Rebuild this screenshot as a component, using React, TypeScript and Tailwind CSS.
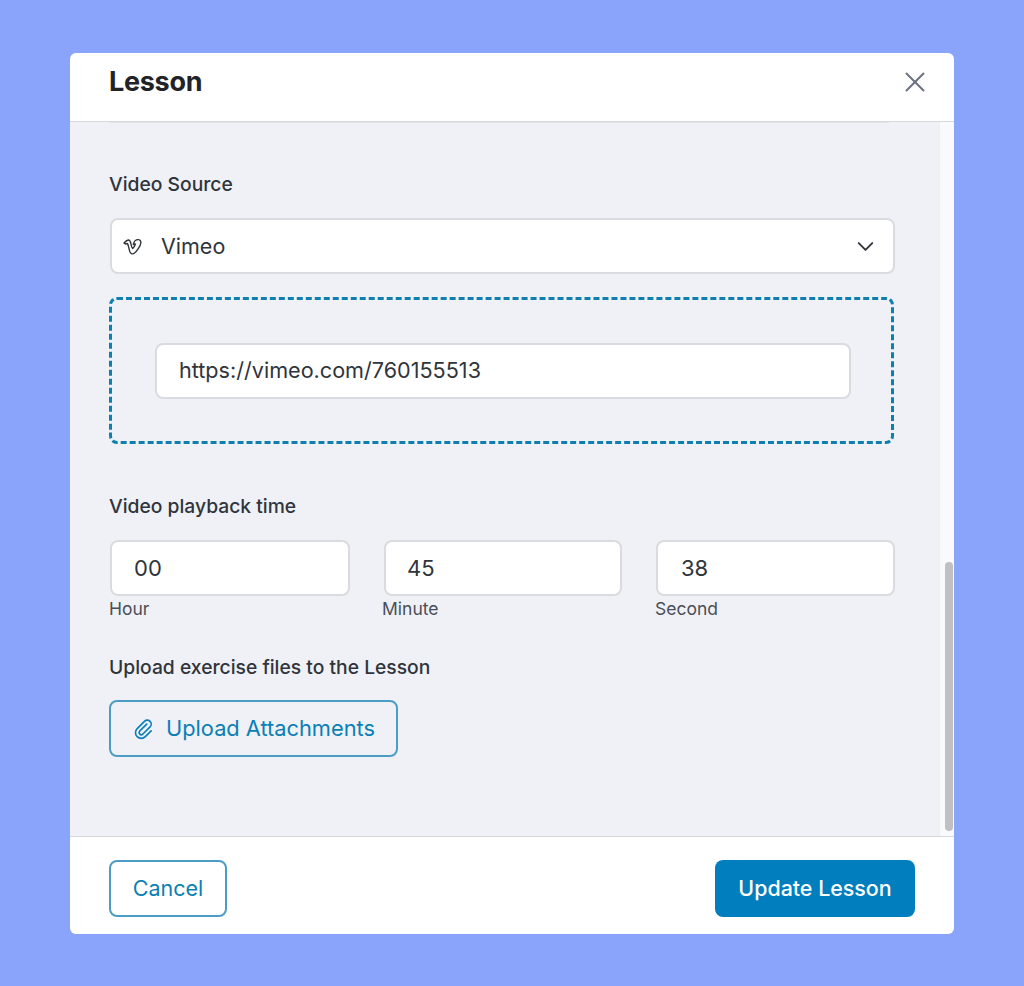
import { ChevronDown, X } from "lucide-react";

function VimeoIcon() {
  return (
    <svg width="19" height="17" viewBox="0 0 19 17" fill="none" stroke="#30343b" strokeWidth="1.4" strokeLinecap="round" strokeLinejoin="round">
      <path d="M1 5C2.500 3.500 4 2 5.500 2 7 2 7.500 3.500 8 6c.3 2 .8 4 1.600 4.500.9-.5 2.900-3.500 2.700-4.500-.5 0-1.300.3-2 .6.500-3.100 2.700-5.100 5.200-5 2 .2 2.500 1.900 2.300 3.400-.3 3-3.800 8-6.300 10-2 1.500-3.500 1-4.500-1-1-2.500-1.500-6-2.200-8-.3-.6-.8-.6-1.800 0z" />
    </svg>
  );
}

function ClipIcon() {
  return (
    <svg width="22" height="22" viewBox="0 0 20 20" fill="none" stroke="currentColor" strokeWidth="1.500" strokeLinecap="round" strokeLinejoin="round">
      <path d="M12.500 5.500 6 12a2 2 0 0 0 2.800 2.800l6.700-6.700a3.600 3.600 0 0 0-5.100-5.100L3.800 9.600a5.200 5.200 0 0 0 7.400 7.400l5.300-5.300" />
    </svg>
  );
}

function TimeField({ value, label, fieldClass }: { value: string; label: string; fieldClass: string }) {
  return (
    <div className="flex flex-col">
      <div className={`h-[56px] flex items-center bg-white border-2 border-[#d9dbe0] rounded-lg text-[22px] text-[#30343b] ${fieldClass}`}>
        {value}
      </div>
      <span className="mt-px text-[17.5px] leading-6 text-[#4a4f57]">{label}</span>
    </div>
  );
}

export default function App() {
  return (
    <div className="h-[986px] bg-[#8aa4fb] pt-[53px] pl-[70px] font-['Inter',sans-serif]">
      <div className="w-[884px] h-[881px] flex flex-col bg-white rounded-md overflow-hidden">
        {/* Header */}
        <div className="h-[69px] shrink-0 flex items-center justify-between pl-[39px] pr-[22px] border-b border-[#d6d8dd]">
          <h1 className="text-[27px] font-bold text-[#212327] tracking-[-0.3px] -mt-[9px]">Lesson</h1>
          <X size={34} strokeWidth={1.4} className="text-[#6b7280] -mt-[11px]" />
        </div>

        {/* Body */}
        <div className="flex-1 flex min-h-0">
          <div className="w-[870px] bg-[#eff1f6] pl-[39px] border-r border-[#eceef1]">
            <div className="w-[780px] h-px bg-[#e2e4e9]" />
            <p className="mt-[49px] text-[19.3px] leading-6 font-medium text-[#30343b]">Video Source</p>
            <div className="mt-[22px] ml-px w-[785px] h-[56px] flex items-center bg-white border-2 border-[#d9dbe0] rounded-lg pl-[11px] pr-[14px] text-[#30343b]">
              <VimeoIcon />
              <span className="ml-[19px] text-[21.5px]">Vimeo</span>
              <ChevronDown size={27} strokeWidth={1.7} className="ml-auto" />
            </div>
            <div className="mt-[23px] w-[785px] h-[147px] flex items-center pl-[43px] border-[3px] border-dashed border-[#0e7fae] rounded-lg">
              <div className="w-[696px] h-[56px] flex items-center pl-[22px] bg-white border-2 border-[#d9dbe0] rounded-lg text-[21.6px] text-[#30343b]">
                https://vimeo.com/760155513
              </div>
            </div>
            <p className="mt-[50px] text-[19.3px] leading-6 font-medium text-[#30343b]">Video playback time</p>
            <div className="mt-[22px] flex gap-[32px]">
              <TimeField value="00" label="Hour" fieldClass="w-[240px] ml-px pl-[22px]" />
              <TimeField value="45" label="Minute" fieldClass="w-[238px] ml-[2px] mr-px pl-[21px]" />
              <TimeField value="38" label="Second" fieldClass="w-[239px] ml-px pl-[23px]" />
            </div>
            <p className="mt-[34px] text-[19.3px] leading-6 font-medium text-[#30343b]">Upload exercise files to the Lesson</p>
            <div className="mt-[21px] w-[289px] h-[57px] flex items-center pl-[22px] border-2 border-[#4c9dc5] rounded-lg text-[#0b7fb5]">
              <ClipIcon />
              <span className="ml-[11px] text-[21.8px]">Upload Attachments</span>
            </div>
          </div>
          {/* Scrollbar */}
          <div className="w-[14px] bg-[#f9fafb] pt-[440px] pl-[5px]">
            <div className="w-[8px] h-[269px] rounded-md bg-[#bfc0c2]" />
          </div>
        </div>

        {/* Footer */}
        <div className="h-[98px] shrink-0 flex items-center justify-between px-[39px] pt-[6px] border-t border-[#d6d8dd]">
          <div className="w-[118px] h-[57px] flex items-center justify-center border-2 border-[#4c9dc5] rounded-lg text-[21.5px] text-[#0b7fb5]">Cancel</div>
          <div className="w-[200px] h-[57px] flex items-center justify-center bg-[#007ebd] rounded-lg text-[21.4px] font-medium text-white">Update Lesson</div>
        </div>
      </div>
    </div>
  );
}
